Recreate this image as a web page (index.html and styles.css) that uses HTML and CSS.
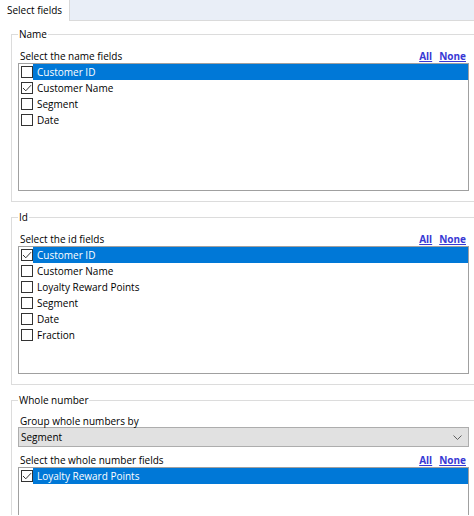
FILE: index.html
```html
<!DOCTYPE html>
<html>
<head>
<meta charset="utf-8">
<link rel="stylesheet" href="styles.css">
</head>
<body>
<div class="tabs">
  <div class="tab">Select fields</div>
  <div class="tab-fill"></div>
</div>
<div class="page">
  <fieldset class="group">
    <legend>Name</legend>
    <div class="label-row"><span>Select the name fields</span><span class="links"><a href="#">All</a><a href="#">None</a></span></div>
    <div class="listbox">
      <div class="item selected"><span class="cb"></span><span class="txt">Customer ID</span></div>
      <div class="item"><span class="cb"><svg viewBox="0 0 12 12" width="12" height="12"><path d="M2 6 L4.8 8.8 L10 3.2" fill="none" stroke="#333" stroke-width="1"/></svg></span><span class="txt">Customer Name</span></div>
      <div class="item"><span class="cb"></span><span class="txt">Segment</span></div>
      <div class="item"><span class="cb"></span><span class="txt">Date</span></div>
    </div>
  </fieldset>

  <fieldset class="group">
    <legend>Id</legend>
    <div class="label-row"><span>Select the id fields</span><span class="links"><a href="#">All</a><a href="#">None</a></span></div>
    <div class="listbox">
      <div class="item selected"><span class="cb"><svg viewBox="0 0 12 12" width="12" height="12"><path d="M2 6 L4.8 8.8 L10 3.2" fill="none" stroke="#333" stroke-width="1"/></svg></span><span class="txt">Customer ID</span></div>
      <div class="item"><span class="cb"></span><span class="txt">Customer Name</span></div>
      <div class="item"><span class="cb"></span><span class="txt">Loyalty Reward Points</span></div>
      <div class="item"><span class="cb"></span><span class="txt">Segment</span></div>
      <div class="item"><span class="cb"></span><span class="txt">Date</span></div>
      <div class="item"><span class="cb"></span><span class="txt">Fraction</span></div>
    </div>
  </fieldset>

  <fieldset class="group last">
    <legend>Whole number</legend>
    <div class="group-label">Group whole numbers by</div>
    <div class="combo"><span>Segment</span><svg class="chev" viewBox="0 0 9 5" width="9" height="5"><path d="M0.5 0.5 L4.5 4.5 L8.5 0.5" fill="none" stroke="#606060" stroke-width="1"/></svg></div>
    <div class="label-row spaced"><span>Select the whole number fields</span><span class="links"><a href="#">All</a><a href="#">None</a></span></div>
    <div class="listbox short">
      <div class="item selected"><span class="cb"><svg viewBox="0 0 12 12" width="12" height="12"><path d="M2 6 L4.8 8.8 L10 3.2" fill="none" stroke="#333" stroke-width="1"/></svg></span><span class="txt">Loyalty Reward Points</span></div>
    </div>
  </fieldset>
</div>
</body>
</html>
```

FILE: styles.css
```css
html, body {
  margin: 0;
  padding: 0;
}
body {
  width: 474px;
  height: 516px;
  overflow: hidden;
  background: #ffffff;
  color: #000000;
  font-family: "Open Sans", "Noto Sans", sans-serif;
  font-size: 10px;
  line-height: 14px;
}
.tabs {
  display: flex;
  height: 21px;
}
.tab {
  width: 70px;
  box-sizing: border-box;
  padding-left: 7px;
  line-height: 20px;
  background: #ffffff;
  border-right: 1px solid #d9d9d9;
  height: 21px;
}
.tab-fill {
  flex: 1;
  height: 20px;
  background: #e9eef7;
  border-bottom: 1px solid #dadada;
}
.page {
  padding-left: 11px;
  height: 495px;
  overflow: hidden;
}
.group {
  margin: 8px 0 0 0;
  width: 463px;
  min-width: 0;
  box-sizing: border-box;
  border: 1px solid #dcdcdc;
  border-right: 0;
  padding: 8px 0 10px 6px;
}
.group:first-child {
  margin-top: 6px;
}
.group.last {
  border-bottom: 0;
  padding-bottom: 0;
}
.group legend {
  padding: 0 1px;
  line-height: 14px;
}
.label-row {
  width: 451px;
  height: 14px;
  display: flex;
  justify-content: space-between;
  padding-left: 2px;
  box-sizing: border-box;
}
.label-row.spaced {
  margin-top: 6px;
}
.links {
  display: flex;
  gap: 7px;
  padding-right: 3px;
}
.links a {
  color: #3838d4;
  font-weight: 700;
  text-decoration: underline;
}
.listbox {
  width: 451px;
  height: 128px;
  box-sizing: border-box;
  border: 1px solid #a0a0a0;
  padding: 0 0 0 2px;
}
.listbox.short {
  height: 48px;
  border-bottom: 0;
}
.item {
  display: flex;
  align-items: center;
  height: 16px;
}
.cb {
  width: 12px;
  height: 12px;
  box-sizing: border-box;
  border: 1px solid #333333;
  background: #ffffff;
  flex: none;
  display: flex;
  align-items: center;
  justify-content: center;
  overflow: hidden;
}
.cb svg {
  display: block;
  flex: none;
}
.txt {
  flex: 1;
  height: 16px;
  line-height: 16px;
  padding-left: 4px;
}
.item.selected .txt {
  background: #0078d7;
  color: #ffffff;
}
.group-label {
  padding-left: 2px;
  line-height: 12px;
  height: 12px;
}
.combo {
  width: 451px;
  height: 20px;
  box-sizing: border-box;
  border: 1px solid #adadad;
  background: #e1e1e1;
  display: flex;
  align-items: center;
  justify-content: space-between;
  padding: 0 6px 0 2px;
}
.chev {
  display: block;
}
```
